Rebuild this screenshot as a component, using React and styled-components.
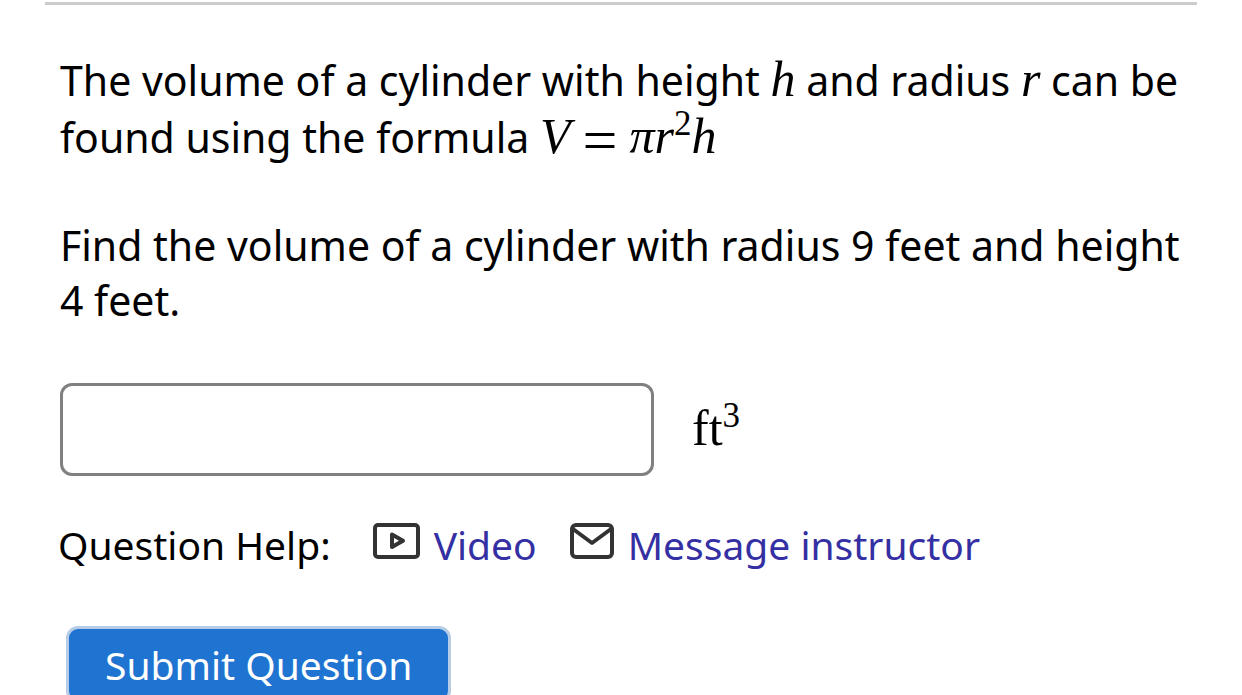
import React, { useState } from "react";
import styled, { createGlobalStyle } from "styled-components";

const GlobalStyle = createGlobalStyle`
  * { box-sizing: border-box; }

  body {
    margin: 0;
    background-color: #fff;
    color: #000;
    font-family: "Trebuchet MS", "Noto Sans", sans-serif;
    font-size: 39px;
    line-height: 55px;
  }
`;

const Page = styled.main`
  margin: 0 45px;
  padding-top: 2px;
`;

const Divider = styled.hr`
  margin: 0;
  border: none;
  border-top: 3px solid #ccc;
`;

const Question = styled.form`
  padding: 47px 12px 0 15px;
`;

const Paragraph = styled.p`
  margin: 0 0 ${(props) => (props.$formula ? "52px" : "55px")};
  font-size: 41px;
  line-height: ${(props) => (props.$formula ? "57px" : "55px")};
`;

const MathText = styled.span`
  font-family: "Liberation Serif", "Times New Roman", serif;
  font-size: 50px;
  font-style: ${(props) => (props.$upright ? "normal" : "italic")};
  line-height: 1;
  white-space: nowrap;

  sup {
    font-size: 35px;
    font-style: normal;
    line-height: 0;
    vertical-align: 18px;
  }

  .operator {
    margin: 0 12px;
    font-size: 62px;
    font-style: normal;
    line-height: 0;
    vertical-align: -8px;
  }
`;

const AnswerRow = styled.div`
  display: flex;
  align-items: center;
  gap: 38px;
  margin-bottom: 41px;
`;

const AnswerInput = styled.input`
  width: 594px;
  max-width: 80%;
  height: 93px;
  padding: 0 18px;
  border: 3px solid #808080;
  border-radius: 12px;
  background-color: #fff;
  font: inherit;
`;

const HelpRow = styled.div`
  display: flex;
  align-items: center;
  margin-left: -2px;
  margin-bottom: 54px;
`;

const HelpLink = styled.a`
  display: flex;
  align-items: center;
  gap: 14px;
  margin-left: ${(props) => (props.$first ? "42px" : "33px")};
  color: #3430a3;
  text-decoration: none;

  svg {
    margin-bottom: 8px;
    fill: none;
    stroke: #333;
    stroke-width: 4;
    stroke-linejoin: round;
  }
`;

const SubmitButton = styled.button`
  display: block;
  margin-left: 6px;
  padding: 8px 36px;
  border: 3px solid #b7cde6;
  border-radius: 12px;
  background-color: #2074d1;
  color: #fff;
  font: inherit;
  cursor: pointer;
`;

const VideoIcon = () => (
  <svg width="47" height="36" viewBox="0 0 47 36" aria-hidden="true">
    <rect x="2" y="2" width="43" height="32" rx="3" />
    <path d="M19 11.500V24L30 17.700Z" />
  </svg>
);

const MailIcon = () => (
  <svg width="44" height="36" viewBox="0 0 44 36" aria-hidden="true">
    <rect x="2" y="2" width="40" height="32" rx="4" />
    <path d="M3 6L22 20L41 6" />
  </svg>
);

const App = () => {
  const [answer, setAnswer] = useState("");

  return (
    <>
      <GlobalStyle />
      <Page>
        <Divider />
        <Question onSubmit={(e) => e.preventDefault()}>
          <Paragraph $formula>
            The volume of a cylinder with height <MathText>h</MathText> and radius{" "}
            <MathText>r</MathText> can be found using the formula{" "}
            <MathText>
              V<span className="operator">=</span>πr<sup>2</sup>h
            </MathText>
          </Paragraph>
          <Paragraph>
            Find the volume of a cylinder with radius 9 feet and height 4 feet.
          </Paragraph>

          <AnswerRow>
            <AnswerInput
              id="answer"
              type="text"
              value={answer}
              onChange={(e) => setAnswer(e.target.value)}
            />
            <label htmlFor="answer">
              <MathText $upright>
                ft<sup>3</sup>
              </MathText>
            </label>
          </AnswerRow>

          <HelpRow>
            <span>Question Help:</span>
            <HelpLink href="#video" $first>
              <VideoIcon />
              Video
            </HelpLink>
            <HelpLink href="#message">
              <MailIcon />
              Message instructor
            </HelpLink>
          </HelpRow>

          <SubmitButton type="submit">Submit Question</SubmitButton>
        </Question>
      </Page>
    </>
  );
};

export default App;
